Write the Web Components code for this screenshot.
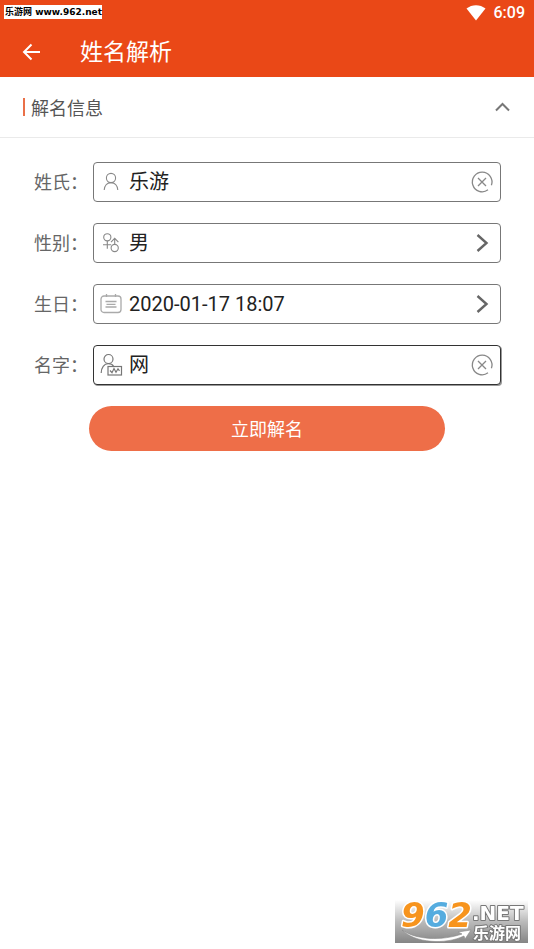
<!DOCTYPE html>
<html lang="zh-CN">
<head>
<meta charset="utf-8">
<meta name="viewport" content="width=device-width, initial-scale=1">
<title>姓名解析</title>
<style>
  html, body { margin: 0; background: #fff; }
  body { font-family: Roboto, "Noto Sans CJK SC", sans-serif; color: #222; }
</style>
</head>
<body>
<name-app></name-app>
<script>
const define = (tag, html, setup) => {
  const template = document.createElement('template');
  template.innerHTML = html;
  customElements.define(tag, class extends HTMLElement {
    constructor() {
      super();
      this.attachShadow({ mode: 'open' }).append(template.content.cloneNode(true));
    }
    connectedCallback() { if (setup) setup(this, this.shadowRoot); }
  });
};

const icons = {
  person: '<svg viewBox="0 0 24 24" width="24" height="24"><g fill="none" stroke="#888" stroke-width="1.1"><circle cx="12" cy="8" r="4.6"/><path d="M5.200 20c.3-4.300 3-7.400 6.800-7.400s6.500 3.100 6.800 7.400"/></g></svg>',
  gender: '<svg viewBox="0 0 24 24" width="24" height="24"><g fill="none" stroke="#888" stroke-width="1.100"><circle cx="8.300" cy="6.300" r="3.600"/><path d="M8.300 9.900v7.800M4 13.700h8.200"/><circle cx="15.700" cy="17" r="3.600"/><path d="M15.700 13.400V7.600M12 11.200l3.700-3.900 3.700 3.900"/></g></svg>',
  calendar: '<svg viewBox="0 0 24 24" width="24" height="24"><g fill="none" stroke="#aaa" stroke-width="1.300"><rect x="2" y="4" width="20" height="16.500" rx="3"/><path d="M7.500 2v3M16.500 2v3"/><path d="M6.500 9.500h11M7.500 12.300h9M6.500 15h11"/></g></svg>',
  chart: '<svg viewBox="0 0 24 24" width="24" height="24"><g fill="none" stroke="#777" stroke-width="1.200"><circle cx="9.500" cy="6" r="4.500"/><path d="M2.200 20c0-5.500 3-9.300 7-9.300 2.500 0 4.500 1 5.500 2.800"/><rect x="9" y="13.500" width="13.500" height="8.500"/><path d="M11 17.500l2 2.200 2-4.200 2 3.700 2-3.400 1.500 2"/></g></svg>'
};

define('status-bar', `
<style>
  :host { display: flex; justify-content: flex-end; align-items: center; gap: 8px; height: 26px; padding-right: 9px; color: #fff; font-size: 16px; line-height: 26px; font-weight: 500; }
  svg { display: block; }
</style>
<svg width="20" height="16" viewBox="0 0 20 16" aria-hidden="true"><path d="M.5 3.500C6-1 14-1 19.500 3.500L10 15.500z" fill="#fff"/></svg>
<slot></slot>`);

define('title-bar', `
<style>
  :host { display: flex; align-items: center; gap: 38px; height: 51px; padding-left: 20px; color: #fff; }
  button { display: flex; padding: 0; border: 0; background: none; }
  h1 { margin: 0; padding-top: 3px; font-size: 23px; line-height: 32px; font-weight: 400; }
</style>
<button type="button" aria-label="返回"><svg width="22" height="22" viewBox="0 0 22 22"><path d="M20 11H4M11.500 3.500L4 11l7.500 7.500" fill="none" stroke="#fff" stroke-width="2"/></svg></button>
<h1><slot></slot></h1>`);

define('section-head', `
<style>
  :host { display: flex; align-items: center; gap: 6px; height: 60px; padding: 0 23px; border-bottom: 1px solid #eaeaea; color: #555; }
  i { width: 2px; height: 18px; background: #ea7048; }
  h2 { flex: 1; margin: 0; padding-top: 3px; font-size: 18px; line-height: 26px; font-weight: 400; }
  button { display: flex; padding: 0; border: 0; background: none; }
</style>
<i></i><h2><slot></slot></h2>
<button type="button" aria-label="收起"><svg width="18" height="18" viewBox="0 0 18 18"><path d="M3 12.500l6.500-6.500 6.500 6.500" fill="none" stroke="#777" stroke-width="2"/></svg></button>`);

define('form-row', `
<style>
  :host { display: grid; grid-template-columns: 59px minmax(0, 1fr); align-items: center; }
  label { padding-top: 2px; font-size: 18px; line-height: 26px; color: #666; white-space: nowrap; }
  .box { box-sizing: border-box; display: flex; align-items: center; gap: 6px; height: 40px; padding: 0 6px 0 5px; border: 1px solid #777; border-radius: 4px; background: #fff; }
  :host([active]) .box { border-color: #333; box-shadow: 1px 1px 0 #999; }
  svg { display: block; }
  .icon { flex: none; }
  input, select { flex: 1; min-width: 0; margin: 0; padding: 0; border: 0; outline: 0; background: none; appearance: none; font: inherit; font-size: 20px; line-height: 30px; height: 30px; color: #222; }
  button { display: flex; flex: none; padding: 0; border: 0; background: none; }
</style>
<label for="field"></label>
<div class="box"><span class="icon"></span></div>`, (host, root) => {
  const box = root.querySelector('.box');
  root.querySelector('label').textContent = host.getAttribute('label');
  root.querySelector('.icon').innerHTML = icons[host.getAttribute('icon')];
  const kind = host.getAttribute('kind');
  const value = host.getAttribute('value');
  const field = document.createElement(kind === 'select' ? 'select' : 'input');
  field.id = 'field';
  if (kind === 'select') ['男', '女'].forEach(v => field.add(new Option(v, v)));
  else { field.type = 'text'; field.readOnly = kind === 'date'; }
  field.value = value;
  const button = document.createElement('button');
  button.type = 'button';
  if (kind === 'text') {
    button.setAttribute('aria-label', '清除');
    button.innerHTML = '<svg width="24" height="24" viewBox="0 0 24 24"><g fill="none" stroke="#888" stroke-width="1.300"><path d="M18 19.800A9.800 9.800 0 1 1 21.400 15.200M8 8l8 8M16 8l-8 8"/></g></svg>';
    button.addEventListener('click', () => { field.value = ''; field.focus(); });
  } else {
    button.setAttribute('aria-label', '选择');
    button.innerHTML = '<svg width="24" height="24" viewBox="0 0 24 24"><path d="M7.500 4l9 8-9 8" fill="none" stroke="#666" stroke-width="2.400"/></svg>';
  }
  box.append(field, button);
});

define('submit-button', `
<style>
  :host { display: block; }
  button { width: 100%; height: 45px; padding: 3px 0 0; border: 0; border-radius: 23px; background: #ee6e48; color: #fff; font: inherit; font-size: 18px; line-height: 26px; }
</style>
<button type="button"><slot></slot></button>`);

define('site-tag', `
<style>
  :host { display: block; position: absolute; left: 4px; top: 5px; padding: 0 0 0 1px; background: #fff; color: #000; font: 700 9px/14px "DejaVu Sans", "Noto Sans CJK SC", sans-serif; white-space: nowrap; }
</style>
<slot></slot>`);

define('site-logo', `
<style>
  :host { display: block; position: fixed; right: 6px; bottom: 6px; }
  svg { display: block; }
  text { font-family: "DejaVu Sans", "Noto Sans CJK SC", sans-serif; font-weight: 700; paint-order: stroke; stroke-linejoin: round; }
  .big { font-size: 34px; font-style: italic; stroke: #fff; stroke-width: 3; }
  .pale { fill: #fff; stroke: #777; stroke-width: 2; }
  .cjk { font-family: "Noto Sans CJK SC", sans-serif; }
</style>
<svg width="133" height="55" viewBox="0 -12 133 55" role="img" aria-label="962.NET 乐游网">
  <defs><linearGradient id="fade" x1="0" y1="0" x2="0" y2="1"><stop offset="0" stop-color="#fff"/><stop offset=".5" stop-color="#bbb"/><stop offset="1" stop-color="#858585"/></linearGradient></defs>
  <rect width="133" height="43" fill="url(#fade)"/>
  <path d="M7 30c14 10 40 11 60 4l-4-2 13-2-6 9-1-3C50 45 20 43 7 30z" fill="#fff" stroke="#888" stroke-width=".6"/>
  <text class="big" x="6" y="27"><tspan fill="#f7941d">9</tspan><tspan fill="#55acdf">6</tspan><tspan fill="#f7941d">2</tspan></text>
  <text class="pale" x="77" y="20" font-size="20">.NET</text>
  <text class="pale cjk" x="78" y="39" font-size="16">乐游网</text>
</svg>`);

define('name-app', `
<style>
  :host { display: block; position: relative; min-height: 100vh; }
  header { background: #ea4817; }
  form { display: flex; flex-direction: column; gap: 21px; padding: 24px 33px 0 34px; }
  submit-button { margin: 0 56px 0 55px; }
</style>
<header><status-bar>6:09</status-bar><title-bar>姓名解析</title-bar></header>
<main>
  <section-head>解名信息</section-head>
  <form>
    <form-row label="姓氏：" icon="person" kind="text" value="乐游"></form-row>
    <form-row label="性别：" icon="gender" kind="select" value="男"></form-row>
    <form-row label="生日：" icon="calendar" kind="date" value="2020-01-17 18:07"></form-row>
    <form-row label="名字：" icon="chart" kind="text" value="网" active></form-row>
    <submit-button>立即解名</submit-button>
  </form>
</main>
<site-tag>乐游网 www.962.net</site-tag>
<site-logo></site-logo>`);
</script>
</body>
</html>
